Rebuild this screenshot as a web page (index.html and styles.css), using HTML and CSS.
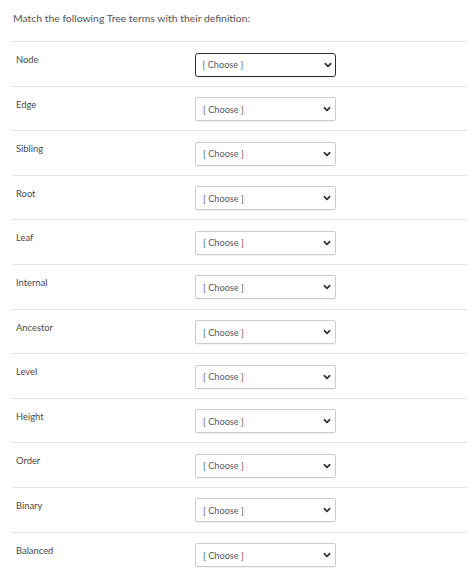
FILE: index.html
```html
<!DOCTYPE html>
<html>
<head>
<meta charset="utf-8">
<link rel="stylesheet" href="styles.css">
</head>
<body>
<div class="quiz">
  <div class="title">Match the following Tree terms with their definition:</div>
  <div class="rows">
    <div class="row"><div class="term">Node</div><div class="select focus"><span>[ Choose ]</span><svg class="chev" viewBox="0 0 8 6" width="8" height="6"><path d="M1.3 1.7 L4 4.3 L6.7 1.7" /></svg></div></div>
    <div class="row"><div class="term">Edge</div><div class="select"><span>[ Choose ]</span><svg class="chev" viewBox="0 0 8 6" width="8" height="6"><path d="M1.3 1.7 L4 4.3 L6.7 1.7" /></svg></div></div>
    <div class="row"><div class="term">Sibling</div><div class="select"><span>[ Choose ]</span><svg class="chev" viewBox="0 0 8 6" width="8" height="6"><path d="M1.3 1.7 L4 4.3 L6.7 1.7" /></svg></div></div>
    <div class="row"><div class="term">Root</div><div class="select"><span>[ Choose ]</span><svg class="chev" viewBox="0 0 8 6" width="8" height="6"><path d="M1.3 1.7 L4 4.3 L6.7 1.7" /></svg></div></div>
    <div class="row"><div class="term">Leaf</div><div class="select"><span>[ Choose ]</span><svg class="chev" viewBox="0 0 8 6" width="8" height="6"><path d="M1.3 1.7 L4 4.3 L6.7 1.7" /></svg></div></div>
    <div class="row"><div class="term">Internal</div><div class="select"><span>[ Choose ]</span><svg class="chev" viewBox="0 0 8 6" width="8" height="6"><path d="M1.3 1.7 L4 4.3 L6.7 1.7" /></svg></div></div>
    <div class="row"><div class="term">Ancestor</div><div class="select"><span>[ Choose ]</span><svg class="chev" viewBox="0 0 8 6" width="8" height="6"><path d="M1.3 1.7 L4 4.3 L6.7 1.7" /></svg></div></div>
    <div class="row"><div class="term">Level</div><div class="select"><span>[ Choose ]</span><svg class="chev" viewBox="0 0 8 6" width="8" height="6"><path d="M1.3 1.7 L4 4.3 L6.7 1.7" /></svg></div></div>
    <div class="row"><div class="term">Height</div><div class="select"><span>[ Choose ]</span><svg class="chev" viewBox="0 0 8 6" width="8" height="6"><path d="M1.3 1.7 L4 4.3 L6.7 1.7" /></svg></div></div>
    <div class="row"><div class="term">Order</div><div class="select"><span>[ Choose ]</span><svg class="chev" viewBox="0 0 8 6" width="8" height="6"><path d="M1.3 1.7 L4 4.3 L6.7 1.7" /></svg></div></div>
    <div class="row"><div class="term">Binary</div><div class="select"><span>[ Choose ]</span><svg class="chev" viewBox="0 0 8 6" width="8" height="6"><path d="M1.3 1.7 L4 4.3 L6.7 1.7" /></svg></div></div>
    <div class="row"><div class="term">Balanced</div><div class="select"><span>[ Choose ]</span><svg class="chev" viewBox="0 0 8 6" width="8" height="6"><path d="M1.3 1.7 L4 4.3 L6.7 1.7" /></svg></div></div>
  </div>
</div>
</body>
</html>
```
FILE: styles.css
```css
html, body {
  margin: 0;
  padding: 0;
  background: #ffffff;
}
body {
  font-family: Lato, "Liberation Sans", sans-serif;
  color: #3b3b3b;
}
.quiz {
  width: 455px;
  margin-left: 12px;
}
.title {
  height: 41px;
  box-sizing: border-box;
  padding-top: 11px;
  padding-left: 1px;
  font-size: 10.4px;
  line-height: 14px;
  color: #555;
}
.row {
  display: flex;
  align-items: flex-start;
  height: 44.6px;
  box-sizing: border-box;
  border-top: 1px solid #e4e4e4;
}
.term {
  width: 179px;
  padding-left: 4px;
  padding-top: 12px;
  font-size: 9.4px;
  line-height: 12px;
  color: #4a4a4a;
}
.select {
  margin-top: 10.5px;
  width: 141px;
  height: 24px;
  box-sizing: border-box;
  border: 1px solid #cccccc;
  border-radius: 2px;
  box-shadow: 0 1px 1px rgba(0,0,0,0.06);
  display: flex;
  align-items: center;
  justify-content: space-between;
  padding: 0 4px 0 7px;
  font-size: 9.2px;
  color: #5a5a5a;
}
.select.focus {
  border: 1.5px solid #2d2d2d;
  border-radius: 3px;
  padding-left: 6.5px;
  padding-right: 3.5px;
}
.chev {
  display: block;
}
.chev path {
  fill: none;
  stroke: #2a2a2a;
  stroke-width: 1.6;
  stroke-linecap: round;
  stroke-linejoin: round;
}
```
